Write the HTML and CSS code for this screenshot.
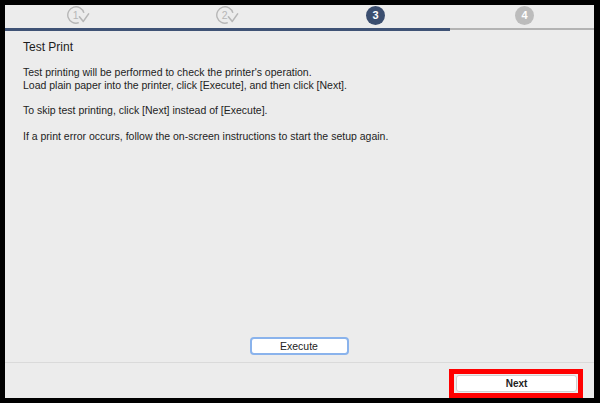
FILE: index.html
```html
<!DOCTYPE html>
<html>
<head>
<meta charset="utf-8">
<link rel="stylesheet" href="styles.css">
</head>
<body>
<div class="window">
  <div class="stepper">
    <div class="steps">
      <div class="step">
        <svg class="done" width="23" height="19" viewBox="0 0 23 19">
          <path d="M11.8 16.7 A8.2 8.2 0 1 1 16.9 6.9" fill="none" stroke="#b7b7b7" stroke-width="1.4"/>
          <path d="M12.4 10.8 L16.3 15.4 L21.6 7.9" fill="none" stroke="#b7b7b7" stroke-width="1.6" stroke-linecap="round" stroke-linejoin="round"/>
          <text x="8.6" y="13.2" text-anchor="middle" class="done-num">1</text>
        </svg>
      </div>
      <div class="step">
        <svg class="done" width="23" height="19" viewBox="0 0 23 19">
          <path d="M11.8 16.7 A8.2 8.2 0 1 1 16.9 6.9" fill="none" stroke="#b7b7b7" stroke-width="1.4"/>
          <path d="M12.4 10.8 L16.3 15.4 L21.6 7.9" fill="none" stroke="#b7b7b7" stroke-width="1.6" stroke-linecap="round" stroke-linejoin="round"/>
          <text x="8.6" y="13.2" text-anchor="middle" class="done-num">2</text>
        </svg>
      </div>
      <div class="step"><span class="num current">3</span></div>
      <div class="step"><span class="num todo">4</span></div>
    </div>
    <div class="progress">
      <div class="progress-done"></div>
      <div class="progress-rest"></div>
    </div>
  </div>

  <div class="content">
    <h1 class="title">Test Print</h1>
    <p class="para">Test printing will be performed to check the printer's operation.<br>Load plain paper into the printer, click [Execute], and then click [Next].</p>
    <p class="para">To skip test printing, click [Next] instead of [Execute].</p>
    <p class="para">If a print error occurs, follow the on-screen instructions to start the setup again.</p>
  </div>

  <div class="actions">
    <button class="btn btn-execute">Execute</button>
  </div>

  <div class="footer">
    <div class="highlight">
      <button class="btn btn-next">Next</button>
    </div>
  </div>
</div>
</body>
</html>
```

FILE: styles.css
```css
html, body {
  margin: 0;
  padding: 0;
}

body {
  width: 600px;
  height: 403px;
  background: #000;
  padding: 5px 6px 5px 5px;
  box-sizing: border-box;
  overflow: hidden;
  font-family: "Liberation Sans", Arial, sans-serif;
}

.window {
  width: 589px;
  height: 393px;
  background: #ececec;
  display: flex;
  flex-direction: column;
  overflow: hidden;
}

.stepper {
  width: 597px;
  margin-left: -2px;
  flex: none;
}

.steps {
  height: 23px;
  display: grid;
  grid-template-columns: repeat(4, 149px);
  align-items: start;
}

.step {
  display: flex;
  justify-content: center;
  padding-top: 1px;
}

.done {
  display: block;
  margin-left: 1px;
}

.done-num {
  font-family: "Liberation Sans", Arial, sans-serif;
  font-size: 10.5px;
  fill: #b7b7b7;
}

.num {
  width: 19px;
  height: 19px;
  border-radius: 50%;
  color: #fff;
  font-size: 11px;
  font-weight: bold;
  display: flex;
  align-items: center;
  justify-content: center;
  line-height: 1;
}

.current {
  background: #3b4e6f;
}

.todo {
  background: #bcbcbc;
}

.progress {
  display: flex;
  align-items: flex-start;
  height: 3px;
}

.progress-done {
  width: 447px;
  height: 3px;
  background: #3f5275;
}

.progress-rest {
  flex: 1;
  height: 2px;
  background: #b3b3b3;
}

.content {
  flex: 1;
  padding: 9px 18px 0;
}

.title {
  margin: 0;
  font-size: 12px;
  line-height: 14px;
  font-weight: normal;
  color: #1c1c1c;
}

.para {
  margin: 11.5px 0 0;
  font-size: 10.5px;
  line-height: 13px;
  color: #232323;
}

.para + .para {
  margin-top: 12.5px;
}

.para:last-child {
  margin-top: 13px;
}

.actions {
  display: flex;
  justify-content: center;
  padding-bottom: 7px;
  padding-right: 1px;
}

.btn {
  font-family: "Liberation Sans", Arial, sans-serif;
  background: #fff;
  color: #222;
  padding: 0;
  margin: 0;
  box-sizing: border-box;
  cursor: default;
}

.btn-execute {
  width: 99px;
  height: 18px;
  border: 2px solid #8ab3ec;
  border-radius: 4px;
  font-size: 10.5px;
}

.footer {
  height: 29px;
  border-top: 1px solid #dadada;
  display: flex;
  justify-content: flex-end;
  align-items: flex-start;
  padding: 6px 11px 0 0;
  box-sizing: content-box;
}

.highlight {
  border: 5px solid #ff0000;
  padding: 1px 1px 1px 2px;
}

.btn-next {
  display: block;
  width: 121px;
  height: 17px;
  border: 1px solid #cfcfcf;
  border-radius: 3px;
  font-size: 10px;
  font-weight: bold;
}
```
